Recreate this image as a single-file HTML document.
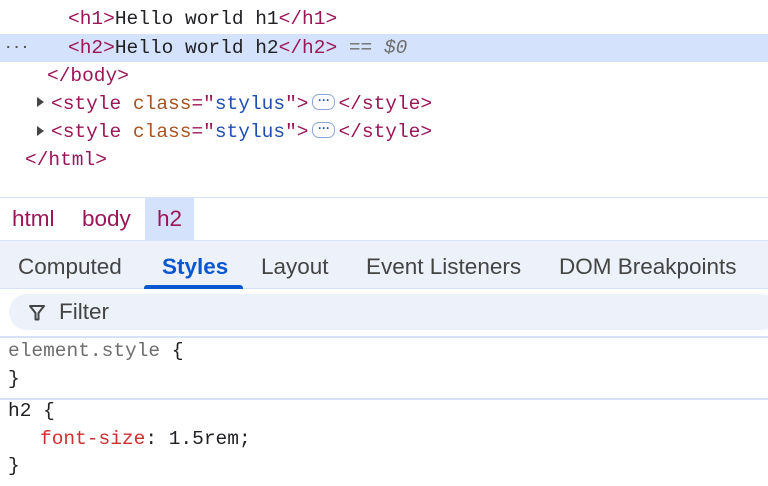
<!DOCTYPE html>
<html><head><style>
*{margin:0;padding:0;box-sizing:border-box}
body{width:768px;height:486px;overflow:hidden;background:#fff;position:relative;font-family:"Liberation Mono",monospace;font-size:19.5px;color:#202124}
.l{position:absolute;white-space:pre;line-height:28px;height:28px}
.t{color:#9b1657}.a{color:#a8531f}.v{color:#1f4fb0}.g{color:#6e6e6e}
.s{font-family:"Liberation Sans",sans-serif;font-size:22.5px}
.dots{display:inline-block;width:23px;height:16px;border:1px solid #8fa7d6;border-radius:7px;vertical-align:middle;position:relative;top:-2px;margin:0 3px 0 4px;color:#1f4fb0;font-size:12px;line-height:11px;text-align:center;font-weight:bold;font-family:"Liberation Sans",sans-serif}
.tri{position:absolute;width:0;height:0;border-left:7px solid #444;border-top:5px solid transparent;border-bottom:5px solid transparent}
</style></head><body>
<div class="l" style="top:5px;left:68px"><span class="t">&lt;h1&gt;</span>Hello world h1<span class="t">&lt;/h1&gt;</span></div>
<div style="position:absolute;top:34px;left:0;width:768px;height:28px;background:#d4e3fb"></div>
<div class="l" style="top:34px;left:4px;color:#555;font-weight:bold;font-size:14px">···</div>
<div class="l" style="top:34px;left:68px"><span class="t">&lt;h2&gt;</span>Hello world h2<span class="t">&lt;/h2&gt;</span> <span class="g">== <i>$0</i></span></div>
<div class="l" style="top:62px;left:47px"><span class="t">&lt;/body&gt;</span></div>
<div class="tri" style="top:97px;left:37px"></div>
<div class="l" style="top:90px;left:51px"><span class="t">&lt;style</span> <span class="a">class</span><span class="t">="</span><span class="v">stylus</span><span class="t">"&gt;</span><span class="dots">···</span><span class="t">&lt;/style&gt;</span></div>
<div class="tri" style="top:126px;left:37px"></div>
<div class="l" style="top:118px;left:51px"><span class="t">&lt;style</span> <span class="a">class</span><span class="t">="</span><span class="v">stylus</span><span class="t">"&gt;</span><span class="dots">···</span><span class="t">&lt;/style&gt;</span></div>
<div class="l" style="top:146px;left:25px"><span class="t">&lt;/html&gt;</span></div>

<div style="position:absolute;top:197px;left:0;width:768px;height:1px;background:#d6e2f8"></div>
<div style="position:absolute;top:198px;left:145px;width:49px;height:42px;background:#d4e3fb"></div>
<div class="s l" style="top:205px;left:12px;color:#9b1657">html</div>
<div class="s l" style="top:205px;left:82px;color:#9b1657">body</div>
<div class="s l" style="top:205px;left:157px;color:#9b1657">h2</div>
<div style="position:absolute;top:240px;left:0;width:768px;height:49px;background:#edf2fa;border-top:1px solid #d6e2f8;border-bottom:1px solid #d6e2f8"></div>
<div class="s l" style="top:253px;left:18px;color:#444">Computed</div>
<div class="s l" style="top:253px;left:162px;color:#0b57d0;font-weight:bold">Styles</div>
<div style="position:absolute;top:285px;left:144px;width:99px;height:4px;background:#0b57d0;border-radius:3px 3px 0 0"></div>
<div class="s l" style="top:253px;left:261px;color:#444">Layout</div>
<div class="s l" style="top:253px;left:366px;color:#444">Event Listeners</div>
<div class="s l" style="top:253px;left:559px;color:#444">DOM Breakpoints</div>
<div style="position:absolute;top:294px;left:9px;width:770px;height:36px;background:#edf2fa;border-radius:18px"></div>
<svg style="position:absolute;top:304px;left:28px" width="18" height="17" viewBox="0 0 18 17"><path d="M2 2H16L10.5 9V15.5H7.5V9Z" fill="none" stroke="#444" stroke-width="2" stroke-linejoin="round"/></svg>
<div class="s l" style="top:298px;left:59px;color:#444">Filter</div>
<div style="position:absolute;top:336px;left:0;width:768px;height:2px;background:#d6e2f8"></div>
<div class="l" style="top:337px;left:8px"><span class="g">element.style</span> {</div>
<div class="l" style="top:365px;left:8px">}</div>
<div style="position:absolute;top:398px;left:0;width:768px;height:2px;background:#d6e2f8"></div>
<div class="l" style="top:397px;left:8px">h2 {</div>
<div class="l" style="top:425px;left:40px"><span style="color:#d03030">font-size</span>: 1.5rem;</div>
<div class="l" style="top:452px;left:8px">}</div>
</body></html>
